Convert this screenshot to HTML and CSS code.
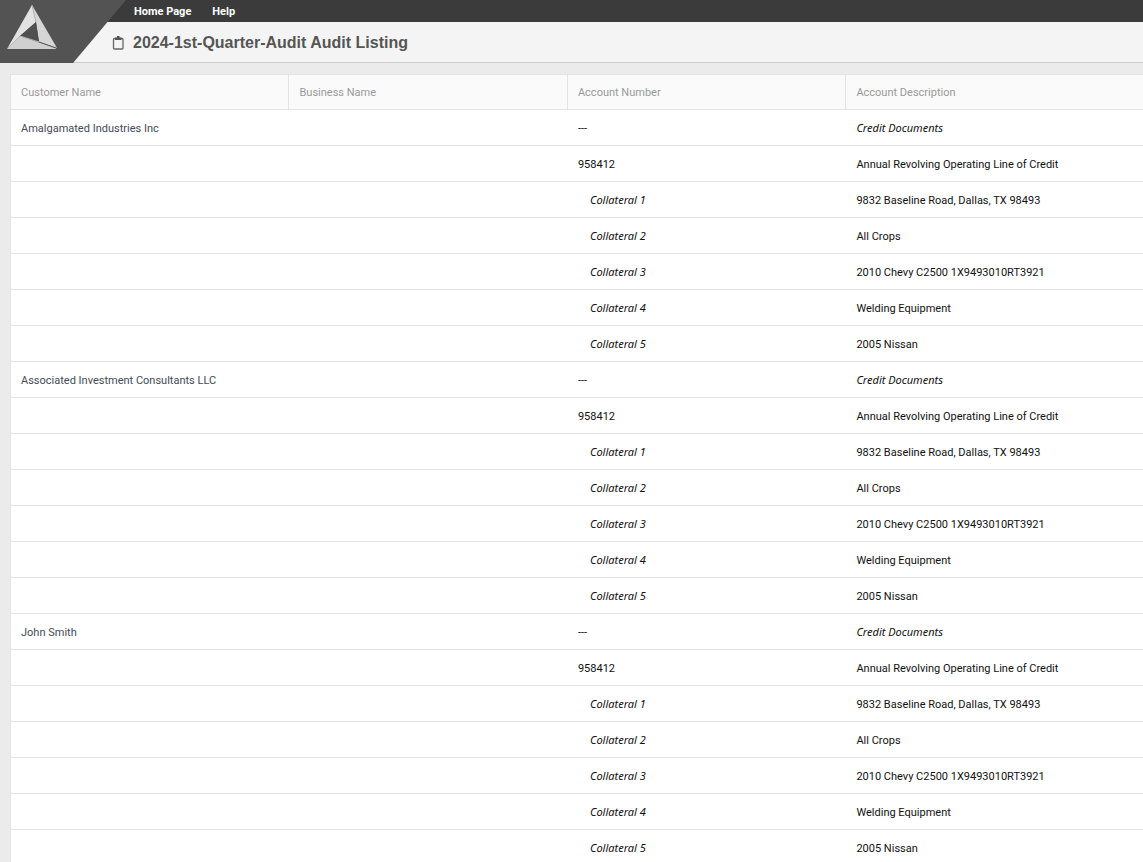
FILE: index.html
```html
<!DOCTYPE html>
<html lang="en">
<head>
    <meta charset="UTF-8">
    <meta name="viewport" content="width=device-width, initial-scale=1.0">
    <title>2024-1st-Quarter-Audit Audit Listing</title>
    <link rel="stylesheet" href="styles.css">
</head>
<body>
    <header class="header">
        <!-- Logo corner, lies over both bars -->
        <svg class="logo" viewBox="0 0 126 63" aria-hidden="true">
            <polygon points="0,0 126,0 73,63 0,63" fill="#535353"/>
            <polygon points="32,5 36,22 20,36 7,49" fill="#e2e2e2"/>
            <polygon points="32,5 57,48 39,42 36,22" fill="#d6d6d6"/>
            <polygon points="7,49 20,36 56,48 56,49" fill="#d0d0d0"/>
            <polygon points="36,22 39,42 20,36" fill="#505050"/>
            <path d="M39 42L56 48" stroke="#555" fill="none"/>
            <path d="M20 36L39 42M32 5L36 22" stroke="#b5b5b5" fill="none"/>
        </svg>
        <nav class="nav">
            <a href="#">Home Page</a>
            <a href="#">Help</a>
        </nav>
        <div class="title-bar">
            <svg class="clipboard" viewBox="0 0 12 14" aria-hidden="true">
                <rect x="1.5" y="2.5" width="9.5" height="10.5" rx="1" fill="none" stroke="#666" stroke-width="1.3"/>
                <path d="M3 1.5h2V0h2.5v1.5h2V4H3z" fill="#555"/>
            </svg>
            <h1>2024-1st-Quarter-Audit Audit Listing</h1>
        </div>
    </header>

    <main class="content">
        <table class="listing">
            <thead>
                <tr>
                    <th>Customer Name</th>
                    <th>Business Name</th>
                    <th>Account Number</th>
                    <th>Account Description</th>
                </tr>
            </thead>
            <!-- Amalgamated Industries Inc -->
            <tbody>
                <tr><td class="customer">Amalgamated Industries Inc</td><td></td><td>---</td><td class="credit">Credit Documents</td></tr>
                <tr><td></td><td></td><td>958412</td><td>Annual Revolving Operating Line of Credit</td></tr>
                <tr><td></td><td></td><td class="collateral">Collateral 1</td><td>9832 Baseline Road, Dallas, TX 98493</td></tr>
                <tr><td></td><td></td><td class="collateral">Collateral 2</td><td>All Crops</td></tr>
                <tr><td></td><td></td><td class="collateral">Collateral 3</td><td>2010 Chevy C2500 1X9493010RT3921</td></tr>
                <tr><td></td><td></td><td class="collateral">Collateral 4</td><td>Welding Equipment</td></tr>
                <tr><td></td><td></td><td class="collateral">Collateral 5</td><td>2005 Nissan</td></tr>
            </tbody>
            <!-- Associated Investment Consultants LLC -->
            <tbody>
                <tr><td class="customer">Associated Investment Consultants LLC</td><td></td><td>---</td><td class="credit">Credit Documents</td></tr>
                <tr><td></td><td></td><td>958412</td><td>Annual Revolving Operating Line of Credit</td></tr>
                <tr><td></td><td></td><td class="collateral">Collateral 1</td><td>9832 Baseline Road, Dallas, TX 98493</td></tr>
                <tr><td></td><td></td><td class="collateral">Collateral 2</td><td>All Crops</td></tr>
                <tr><td></td><td></td><td class="collateral">Collateral 3</td><td>2010 Chevy C2500 1X9493010RT3921</td></tr>
                <tr><td></td><td></td><td class="collateral">Collateral 4</td><td>Welding Equipment</td></tr>
                <tr><td></td><td></td><td class="collateral">Collateral 5</td><td>2005 Nissan</td></tr>
            </tbody>
            <!-- John Smith -->
            <tbody>
                <tr><td class="customer">John Smith</td><td></td><td>---</td><td class="credit">Credit Documents</td></tr>
                <tr><td></td><td></td><td>958412</td><td>Annual Revolving Operating Line of Credit</td></tr>
                <tr><td></td><td></td><td class="collateral">Collateral 1</td><td>9832 Baseline Road, Dallas, TX 98493</td></tr>
                <tr><td></td><td></td><td class="collateral">Collateral 2</td><td>All Crops</td></tr>
                <tr><td></td><td></td><td class="collateral">Collateral 3</td><td>2010 Chevy C2500 1X9493010RT3921</td></tr>
                <tr><td></td><td></td><td class="collateral">Collateral 4</td><td>Welding Equipment</td></tr>
                <tr><td></td><td></td><td class="collateral">Collateral 5</td><td>2005 Nissan</td></tr>
            </tbody>
        </table>
    </main>
</body>
</html>
```
FILE: styles.css
```css
body {
    margin: 0;
    background-color: #ebebeb;
    color: #111;
    font-family: "Segoe UI", Roboto, sans-serif;
    font-size: 11px;
}

.header {
    position: relative;
}

.logo {
    position: absolute;
    top: 0;
    left: 0;
    width: 126px;
    height: 63px;
}

.nav {
    display: flex;
    align-items: center;
    gap: 21px;
    height: 22px;
    padding-left: 134px;
    background-color: #3b3b3b;
}

.nav a {
    color: #fff;
    font-weight: bold;
    text-decoration: none;
}

.nav a:hover {
    text-decoration: underline;
}

.title-bar {
    display: flex;
    align-items: center;
    gap: 9px;
    height: 38px;
    padding: 2px 0 0 112px;
    background-color: #f4f4f4;
    border-bottom: 1px solid #ccc;
}

.clipboard {
    width: 12px;
    height: 14px;
}

.title-bar h1 {
    margin: 0;
    color: #555;
    font-family: "Liberation Sans", Arial, sans-serif;
    font-size: 16px;
    font-weight: bold;
}

.content {
    padding: 11px 0 0 10px;
}

.listing {
    width: 100%;
    table-layout: fixed;
    border-collapse: separate;
    border-spacing: 0;
    background-color: #fff;
    border-top: 1px solid #e3e3e3;
    border-left: 1px solid #e3e3e3;
}

.listing th,
.listing td {
    box-sizing: border-box;
    height: 36px;
    padding: 3px 10px 0;
    border-bottom: 1px solid #e3e3e3;
    line-height: 16px;
    text-align: left;
    white-space: nowrap;
}

.listing th {
    width: 24.6%;
    height: 35px;
    padding-top: 2px;
    background-color: #fafafa;
    border-right: 1px solid #e3e3e3;
    color: #999;
    font-weight: normal;
}

.listing th:last-child {
    width: auto;
    border-right: none;
}

.listing .customer {
    color: #444a57;
}

.listing .credit,
.listing .collateral {
    padding-top: 1px;
    font-family: "Segoe UI", "Noto Sans", sans-serif;
    font-style: italic;
}

.listing .collateral {
    padding-left: 22px;
}
```
